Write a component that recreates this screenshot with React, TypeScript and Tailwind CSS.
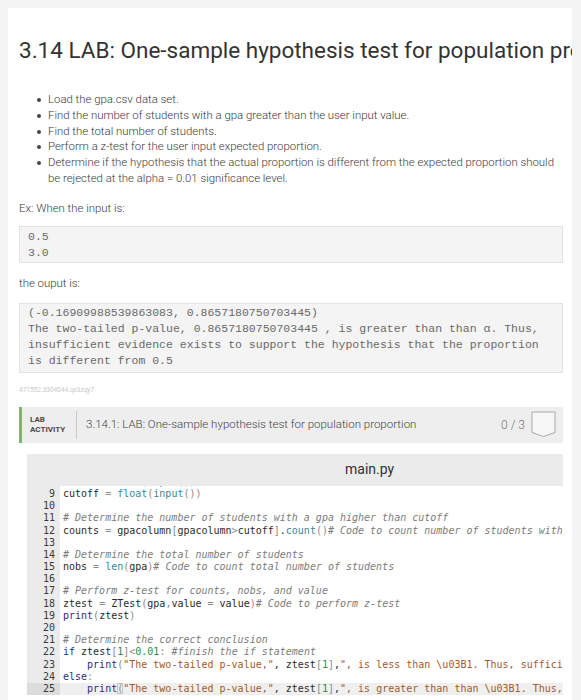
import React from "react";

// Token kinds for the little code viewer
type Tok = [string, keyof typeof TOK];

const TOK = {
  id: "text-[#2b2b2b]",
  op: "text-[#8a8a8a]",
  fn: "text-[#3b8797]",
  kw: "text-[#2e2e86]",
  str: "text-[#a4592e]",
  num: "text-[#2f8f3c]",
  cm: "text-[#7c7c7c] italic",
};

const ALPHA = "\\u03B1";

const CODE: { n: number; toks: Tok[]; active?: boolean }[] = [
  { n: 8, toks: [["value", "id"], [" = ", "op"], ["float", "fn"], ["(", "op"], ["input", "fn"], ["())", "op"]] },
  { n: 9, toks: [["cutoff", "id"], [" = ", "op"], ["float", "fn"], ["(", "op"], ["input", "fn"], ["())", "op"]] },
  { n: 10, toks: [] },
  { n: 11, toks: [["# Determine the number of students with a gpa higher than cutoff", "cm"]] },
  {
    n: 12,
    toks: [
      ["counts", "id"], [" = ", "op"], ["gpacolumn", "id"], ["[", "op"], ["gpacolumn", "id"], [">", "op"],
      ["cutoff", "id"], ["]", "op"], [".", "id"], ["count", "fn"], ["()", "op"],
      ["# Code to count number of students with a gpa higher than cutoff", "cm"],
    ],
  },
  { n: 13, toks: [] },
  { n: 14, toks: [["# Determine the total number of students", "cm"]] },
  {
    n: 15,
    toks: [["nobs", "id"], [" = ", "op"], ["len", "fn"], ["(", "op"], ["gpa", "id"], [")", "op"], ["# Code to count total number of students", "cm"]],
  },
  { n: 16, toks: [] },
  { n: 17, toks: [["# Perform z-test for counts, nobs, and value", "cm"]] },
  {
    n: 18,
    toks: [
      ["ztest", "id"], [" = ", "op"], ["ZTest", "id"], ["(", "op"], ["gpa", "id"], [",", "op"], ["value", "id"],
      [" = ", "op"], ["value", "id"], [")", "op"], ["# Code to perform z-test", "cm"],
    ],
  },
  { n: 19, toks: [["print", "kw"], ["(", "op"], ["ztest", "id"], [")", "op"]] },
  { n: 20, toks: [] },
  { n: 21, toks: [["# Determine the correct conclusion", "cm"]] },
  {
    n: 22,
    toks: [
      ["if", "kw"], [" ztest", "id"], ["[", "op"], ["1", "num"], ["]", "op"], ["<", "op"], ["0.01", "num"],
      [": ", "op"], ["#finish the if statement", "cm"],
    ],
  },
  {
    n: 23,
    toks: [
      ["    print", "kw"], ["(", "op"], ['"The two-tailed p-value,"', "str"], [", ", "id"], ["ztest", "id"], ["[", "op"],
      ["1", "num"], ["]", "op"], [",", "id"], ['", is less than ' + ALPHA + '. Thus, sufficient evidence exists"', "str"],
    ],
  },
  { n: 24, toks: [["else", "kw"], [":", "op"]] },
  {
    n: 25,
    active: true,
    toks: [
      ["    print", "kw"], ["(", "op"], ['"The two-tailed p-value,"', "str"], [", ", "id"], ["ztest", "id"], ["[", "op"],
      ["1", "num"], ["]", "op"], [",", "id"], ['", is greater than than ' + ALPHA + '. Thus, insufficient evidence"', "str"],
    ],
  },
];

const BULLETS = [
  "Load the gpa.csv data set.",
  "Find the number of students with a gpa greater than the user input value.",
  "Find the total number of students.",
  "Perform a z-test for the user input expected proportion.",
];

function Badge() {
  return (
    <svg width="25" height="27" viewBox="0 0 25 27" className="ml-[6px] shrink-0">
      <path d="M1 1 H24 V21.5 L12.5 25.5 L1 21.5 Z" fill="#f6f6f6" stroke="#a9a9a9" strokeWidth="1" />
    </svg>
  );
}

function CodeLine({ toks, active }: { toks: Tok[]; active?: boolean }) {
  return (
    <div className={"h-[12.2px] pl-[3px] whitespace-pre " + (active ? "bg-[#efefef]" : "")}>
      {toks.map(([text, kind], i) => {
        // bracket-match box on the active line
        if (active && i === 1) {
          return (
            <span key={i} className={TOK[kind] + " outline outline-1 outline-[#c4c4c4] -outline-offset-1"}>
              {text}
            </span>
          );
        }
        return (
          <span key={i} className={TOK[kind]}>
            {text}
          </span>
        );
      })}
      {toks.length === 0 && " "}
    </div>
  );
}

export default function App() {
  return (
    <div className="h-[700px] w-[581px] overflow-hidden bg-[#f3f3f3] pl-2 pt-2 font-['Roboto',sans-serif]">
      <div className="h-[692px] w-[564px] overflow-hidden bg-white pl-[11px] pr-[9px] pt-[28px]">
        {/* Titel */}
        <h1 className="whitespace-nowrap text-[22.5px] leading-[28px] font-normal text-[#333]">
          3.14 LAB: One-sample hypothesis test for population proportion
        </h1>

        {/* Aufgabenliste */}
        <ul className="mt-[28px] text-[11.4px] leading-[15.8px] font-light text-[#3a3a3a]">
          {BULLETS.map((b) => (
            <li key={b} className="flex items-start">
              <span className="ml-[18px] mt-[6px] mr-[7px] h-[4px] w-[4px] shrink-0 rounded-full bg-[#444]" />
              <span className="whitespace-nowrap">{b}</span>
            </li>
          ))}
          <li className="flex items-start">
            <span className="ml-[18px] mt-[6px] mr-[7px] h-[4px] w-[4px] shrink-0 rounded-full bg-[#444]" />
            <span className="whitespace-nowrap">
              Determine if the hypothesis that the actual proportion is different from the expected proportion should
              <br />
              be rejected at the alpha = 0.01 significance level.
            </span>
          </li>
        </ul>

        <p className="mt-[13px] text-[11.4px] leading-4 font-light text-[#3a3a3a]">Ex: When the input is:</p>

        <pre className="mt-[10px] border border-[#e2e2e2] bg-[#f4f4f4] pl-[8px] pt-[2px] pb-[1px] font-['Liberation_Mono',monospace] text-[11.5px] leading-4 text-[#6a6a6a]">
          {"0.5\n3.0"}
        </pre>

        <p className="mt-[12px] text-[11.4px] leading-4 font-light text-[#3a3a3a]">the ouput is:</p>

        <pre className="mt-[12px] border border-[#e2e2e2] bg-[#f4f4f4] pl-[8px] pt-[1px] pb-[3px] font-['Liberation_Mono',monospace] text-[11.5px] leading-4 text-[#6a6a6a]">
          {"(-0.16909988539863083, 0.8657180750703445)\n" +
            "The two-tailed p-value, 0.8657180750703445 , is greater than than \u03b1. Thus,\n" +
            "insufficient evidence exists to support the hypothesis that the proportion\n" +
            "is different from 0.5"}
        </pre>

        <p className="mt-[12px] text-[6.5px] leading-[10px] text-[#c8c8c8]">471552.3304044.qx3zqy7</p>

        {/* Lab-Aktivität */}
        <div className="mt-[12px] flex h-[36px] items-center border-l-[3px] border-[#6dbf6e] bg-[#eeeeee] pr-[7px]">
          <div className="w-[54px] pl-[8px] text-[8px] font-bold leading-[10px] text-[#4a4a4a]">
            LAB
            <br />
            ACTIVITY
          </div>
          <div className="h-[28px] w-px bg-[#c9c9c9]" />
          <span className="ml-[9px] text-[11.5px] font-light text-[#444]">
            3.14.1: LAB: One-sample hypothesis test for population proportion
          </span>
          <span className="ml-auto text-[12px] font-light text-[#777]">0 / 3</span>
          <Badge />
        </div>

        {/* Editor */}
        <div className="ml-[8px] mt-[11px]">
          <div className="flex h-[32px] items-center bg-[#ebebeb] pl-[318px] text-[14px] text-[#333]">main.py</div>
          <div className="h-[220px] overflow-hidden font-['DejaVu_Sans_Mono',monospace] text-[10px] leading-[12.2px]">
            <div className="-mt-[10px] flex">
              <div className="w-[33px] shrink-0 bg-[#ebebeb] text-right text-[#3a3a3a]">
                {CODE.map((l) => (
                  <div key={l.n} className={"h-[12.2px] pr-[5px] " + (l.active ? "bg-[#dcdcdc]" : "")}>
                    {l.n}
                  </div>
                ))}
              </div>
              <div className="min-w-0 flex-1 overflow-hidden bg-white">
                {CODE.map((l) => (
                  <CodeLine key={l.n} toks={l.toks} active={l.active} />
                ))}
              </div>
            </div>
          </div>
        </div>
      </div>
    </div>
  );
}
